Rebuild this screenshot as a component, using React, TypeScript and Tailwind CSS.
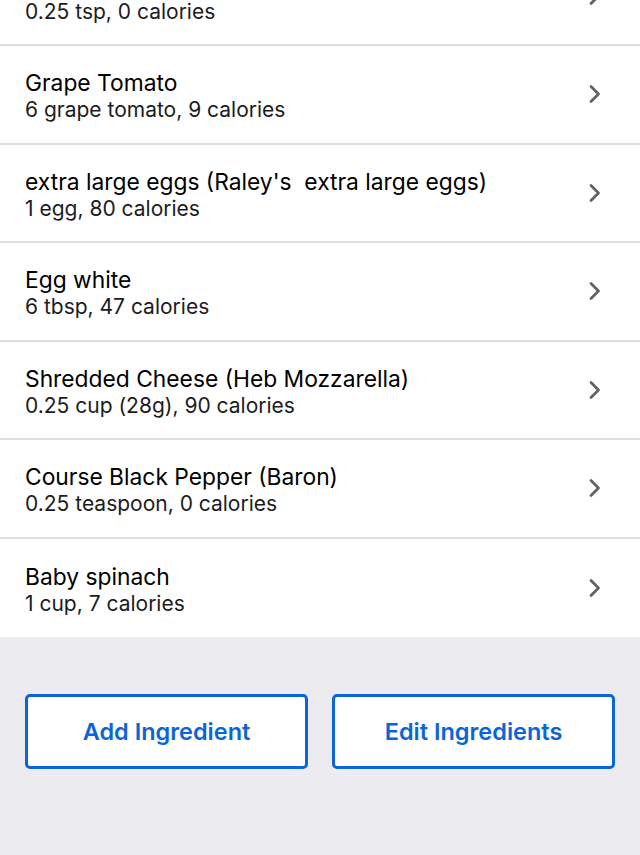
import React from 'react';

interface Ingredient {
  name: string;
  detail: string;
}

const ingredients: Ingredient[] = [
  { name: 'Salt', detail: '0.25 tsp, 0 calories' },
  { name: 'Grape Tomato', detail: '6 grape tomato, 9 calories' },
  { name: "extra large eggs (Raley's\u00a0 extra large eggs)", detail: '1 egg, 80 calories' },
  { name: 'Egg white', detail: '6 tbsp, 47 calories' },
  { name: 'Shredded Cheese (Heb Mozzarella)', detail: '0.25 cup (28g), 90 calories' },
  { name: 'Course Black Pepper (Baron)', detail: '0.25 teaspoon, 0 calories' },
  { name: 'Baby spinach', detail: '1 cup, 7 calories' },
];

const Chevron = () => (
  <svg width="14" height="20" viewBox="0 0 14 20" fill="none" className="shrink-0">
    <path d="M3 2.5 L10.5 10 L3 17.5" stroke="#636366" strokeWidth="2.8" strokeLinecap="round" strokeLinejoin="round" />
  </svg>
);

const IngredientRow: React.FC<{ item: Ingredient; last: boolean }> = ({ item, last }) => (
  <div className={`flex h-[98.5px] items-center pl-[25px] pr-[38px] bg-white ${last ? '' : 'border-b-2 border-[#dedee0]'}`}>
    <div className="flex-1 min-w-0 pt-[4px]">
      <div className="text-[22.8px] leading-[27px] text-black">{item.name}</div>
      <div className="text-[21px] leading-[27px] text-[#1c1c1e]">{item.detail}</div>
    </div>
    <Chevron />
  </div>
);

export default function App() {
  return (
    <div
      className="w-[640px] h-[855px] overflow-hidden bg-[#ebebf0]"
      style={{ fontFamily: 'Inter, "Noto Sans", sans-serif' }}
    >
      <div className="-mt-[52.5px] bg-white">
        {ingredients.map((item, i) => (
          <IngredientRow key={i} item={item} last={i === ingredients.length - 1} />
        ))}
      </div>
      <div className="flex gap-[24px] px-[25px] pt-[57px]">
        <button className="flex-1 h-[75px] rounded-[5px] border-[3px] border-[#0a66d8] bg-white text-[23.5px] font-semibold text-[#0a66d8]">
          Add Ingredient
        </button>
        <button className="flex-1 h-[75px] rounded-[5px] border-[3px] border-[#0a66d8] bg-white text-[23.5px] font-semibold text-[#0a66d8]">
          Edit Ingredients
        </button>
      </div>
    </div>
  );
}
